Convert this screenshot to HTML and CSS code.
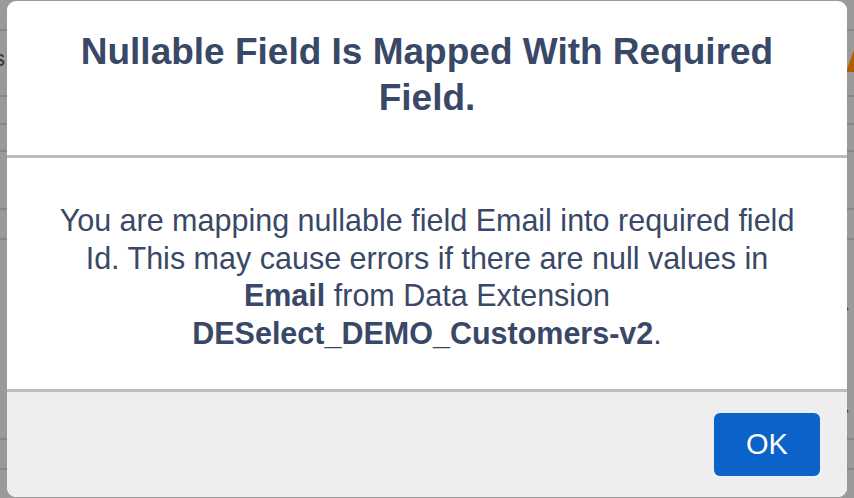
FILE: index.html
```html
<!DOCTYPE html>
<html>
<head>
<meta charset="utf-8">
<link rel="stylesheet" href="styles.css">
</head>
<body>
<div class="backdrop">
  <div class="bg-line l1"></div>
  <div class="bg-line l2"></div>
  <div class="bg-line l3"></div>
  <div class="bg-line l4"></div>
  <div class="bg-line l5"></div>
  <div class="bg-line l6"></div>
  <div class="bg-line l7"></div>
  <div class="bg-line l8"></div>
  <span class="bg-s">s</span>
  <div class="bg-tri"></div>
  <svg class="bg-chart" width="20" height="498" viewBox="0 0 20 498">
    <path d="M0 118 L10 130" stroke="#3a4668" stroke-width="2" fill="none"/>
    <path d="M0 290 L14 310" stroke="#3a4668" stroke-width="2" fill="none"/>
    <path d="M0 396 L14 412" stroke="#3a4668" stroke-width="2" fill="none"/>
  </svg>

  <div class="modal">
    <header class="modal-header">
      <h2 class="modal-title">Nullable Field Is Mapped With Required Field.</h2>
    </header>
    <div class="modal-body">
      <p class="modal-text">You are mapping nullable field Email into required field Id. This may cause errors if there are null values in <b>Email</b> from Data Extension <b>DESelect_DEMO_Customers-v2</b>.</p>
    </div>
    <footer class="modal-footer">
      <button class="btn-ok">OK</button>
    </footer>
  </div>
</div>
</body>
</html>
```
FILE: styles.css
```css
html, body {
  margin: 0;
  padding: 0;
  width: 854px;
  height: 498px;
  overflow: hidden;
}
body {
  font-family: "Liberation Sans", Arial, sans-serif;
}
.backdrop {
  position: relative;
  width: 854px;
  height: 498px;
  background: #9a9a9a;
  padding-top: 1px;
  box-sizing: border-box;
  overflow: hidden;
}
.bg-line {
  position: absolute;
  height: 2px;
  background: #878787;
  left: 0;
  right: 0;
}
.l1 { top: 29px; }
.l2 { top: 95px; }
.l3 { top: 123px; }
.l4 { top: 150px; }
.l5 { top: 208px; }
.l6 { top: 238px; }
.l7 { top: 438px; }
.l8 { top: 468px; }
.bg-s {
  position: absolute;
  left: -6px;
  top: 46px;
  font-size: 22px;
  line-height: 26px;
  color: #333;
}
.bg-tri {
  position: absolute;
  right: 0;
  top: 50px;
  width: 0;
  height: 0;
  border-left: 8px solid transparent;
  border-bottom: 22px solid #b35c00;
}
.bg-chart {
  position: absolute;
  right: 0;
  top: 0;
}
.modal {
  position: relative;
  margin-left: 7px;
  width: 840px;
  height: 496px;
  border-radius: 9px;
  background: #fff;
  overflow: hidden;
  display: flex;
  flex-direction: column;
}
.modal-header {
  height: 157px;
  box-sizing: border-box;
  padding: 28px 40px 0;
  border-bottom: 3px solid #bdbdbd;
}
.modal-title {
  margin: 0;
  text-align: center;
  color: #394867;
  font-size: 37px;
  line-height: 46px;
  font-weight: bold;
}
.modal-body {
  height: 234px;
  box-sizing: border-box;
  padding: 44px 46px 0;
  border-bottom: 3px solid #bdbdbd;
}
.modal-text {
  margin: 0;
  text-align: center;
  color: #394867;
  font-size: 30.5px;
  line-height: 37.5px;
}
.modal-text b {
  font-weight: bold;
}
.modal-footer {
  flex: 1;
  background: #eeeeee;
  display: flex;
  justify-content: flex-end;
  align-items: flex-start;
  padding: 21px 27px 0 0;
}
.btn-ok {
  width: 106px;
  height: 63px;
  border: none;
  border-radius: 6px;
  background: #0b62c9;
  color: #fff;
  font-family: "Liberation Sans", Arial, sans-serif;
  font-size: 29px;
  padding: 0;
}
```
